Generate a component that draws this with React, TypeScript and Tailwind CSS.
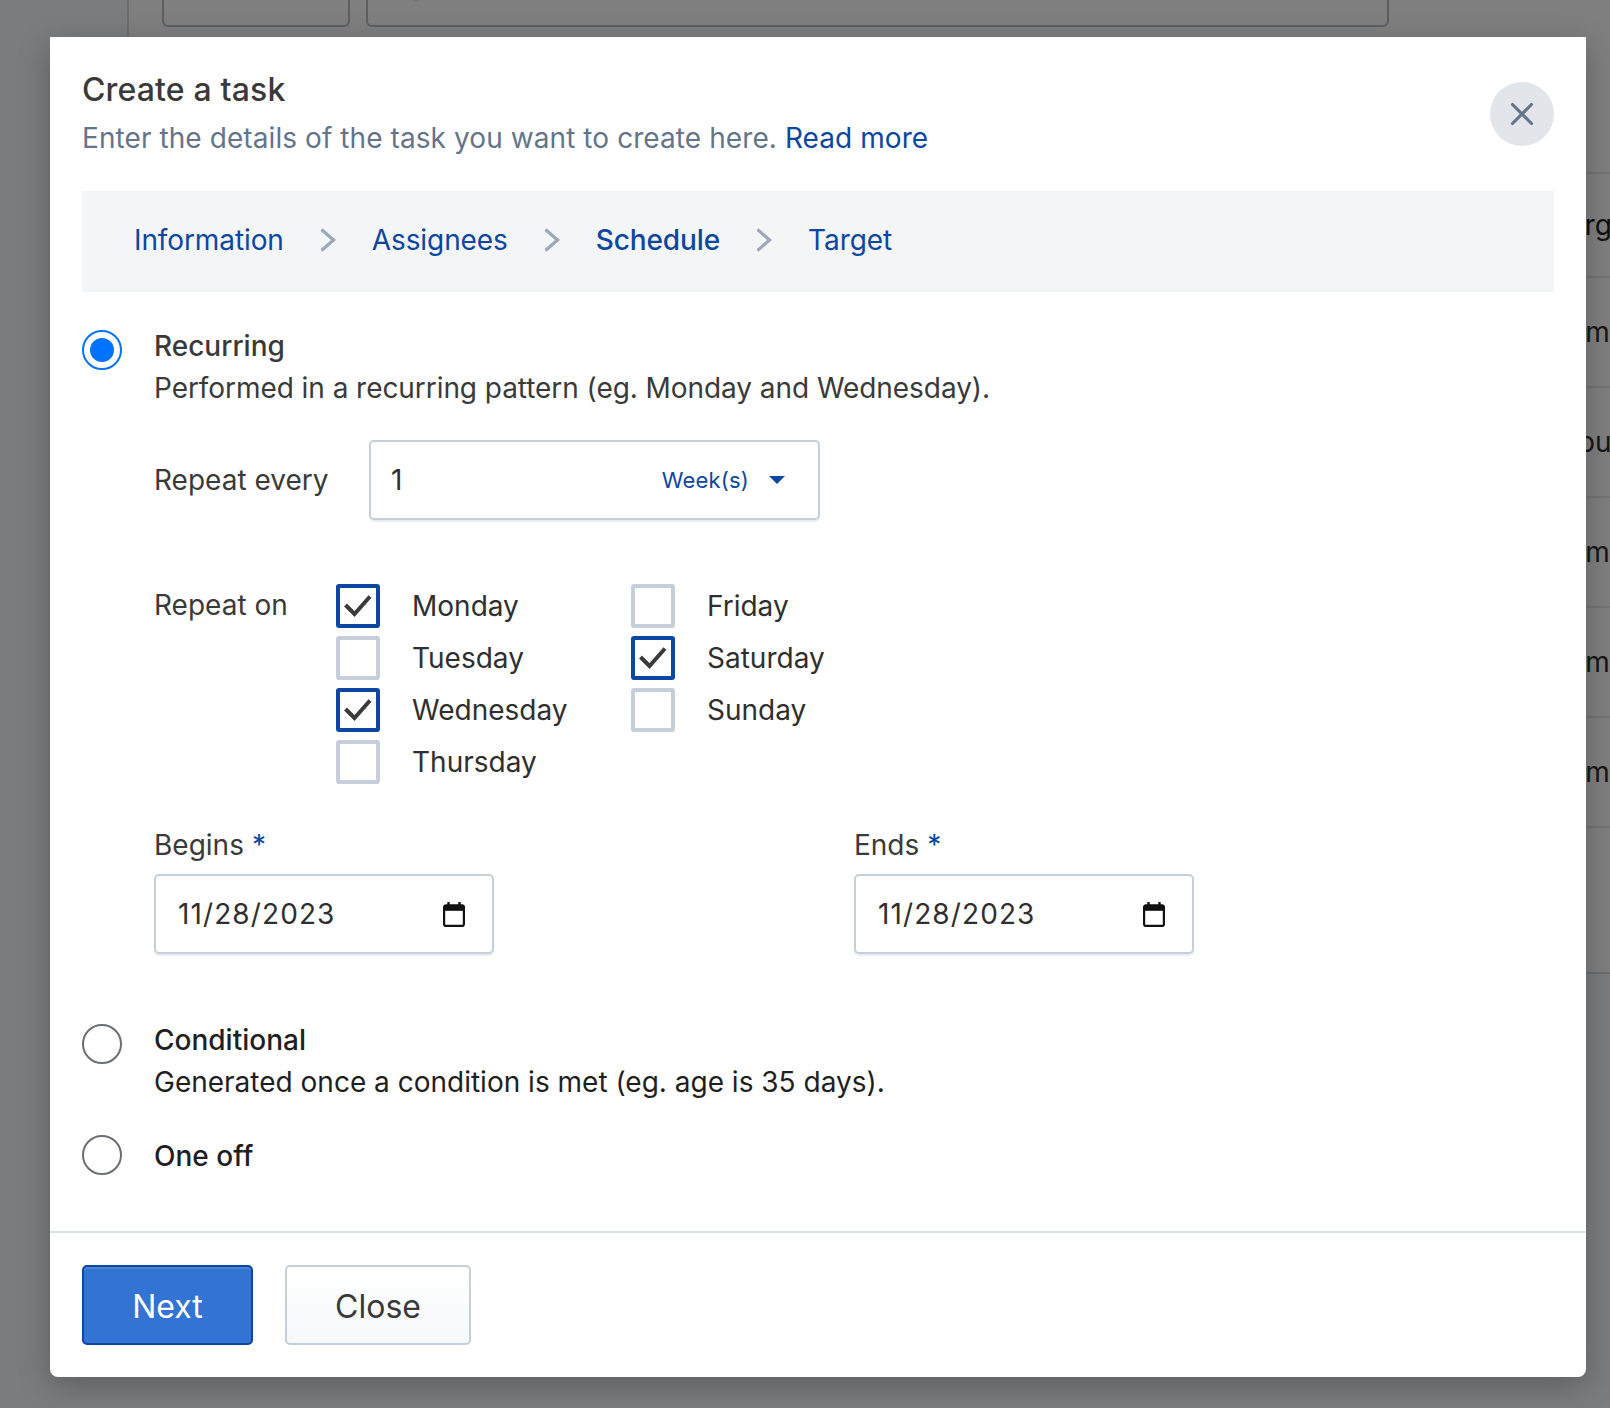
import React from "react";
import { Search, X } from "lucide-react";

const rows = ["Template", "Mount", "Template", "Template", "Template"];

function Radio({ checked }: { checked?: boolean }) {
  if (checked) {
    return (
      <span className="flex h-10 w-10 shrink-0 items-center justify-center rounded-full border-2 border-[#0073ff] bg-white">
        <span className="h-6 w-6 rounded-full bg-[#0073ff]" />
      </span>
    );
  }
  return <span className="h-10 w-10 shrink-0 rounded-full border-2 border-[#6b6f73] bg-white" />;
}

function Day({ label, checked }: { label: string; checked?: boolean }) {
  return (
    <div className="flex h-11 items-center">
      {checked ? (
        <span className="flex h-11 w-11 shrink-0 items-center justify-center rounded-[3px] border-4 border-[#0d47a1] bg-white">
          <svg width="28" height="24" viewBox="0 0 28 24" fill="none">
            <path d="M1.5 11L10.5 20L26 2.5" stroke="#3b3b3b" strokeWidth="4" />
          </svg>
        </span>
      ) : (
        <span className="h-11 w-11 shrink-0 rounded-[3px] border-4 border-[#c6cfd9] bg-white" />
      )}
      <span className="ml-[32px] text-[#2f2f2f]">{label}</span>
    </div>
  );
}

function DateField({ label }: { label: string }) {
  return (
    <div className="w-[340px]">
      <div className="mb-[8px] h-[42px] leading-[42px] text-[#3a3a3a]">
        {label}
        <span className="ml-[8px] text-[#0d47a1]">*</span>
      </div>
      <div className="flex h-20 items-center justify-between rounded-[5px] border-2 border-[#c6cfd9] pl-[22px] pr-[27px] text-[#2f2f2f] shadow-[0_2px_0_#e9edf1]">
        <span className="tracking-[1.1px]">11/28/2023</span>
        <svg width="22" height="25" viewBox="0 0 22 25" fill="none">
          <path d="M5.5 0V4M16.5 0V4" stroke="#111" strokeWidth="2.4" />
          <rect x="1.1" y="3.3" width="19.8" height="20.6" rx="2" stroke="#111" strokeWidth="2.2" />
          <rect x="1.1" y="3.3" width="19.8" height="5.5" fill="#111" />
        </svg>
      </div>
    </div>
  );
}

function Chevron() {
  return (
    <svg className="ml-[35px] mr-[36px] shrink-0" width="17" height="24" viewBox="0 0 17 24" fill="none">
      <path d="M2.5 1.5L14.5 12L2.5 22.5" stroke="#9aa8b8" strokeWidth="3.2" />
    </svg>
  );
}

export default function App() {
  return (
    <div className="relative h-[1408px] w-full overflow-hidden bg-[#f4f8fc] font-['Inter',sans-serif] text-[28px] leading-[42px]">
      {/* page behind the dialog */}
      <div className="ml-[127px] h-[974px] border-b-2 border-l-2 border-[#d4d9df] bg-white">
        <div className="flex h-[172px] items-start gap-4 pl-[33px]">
          <div className="h-[27px] w-[188px] rounded-b-[6px] border-2 border-t-0 border-[#b8c1cb]" />
          <div className="h-[27px] w-[1023px] rounded-b-[6px] border-2 border-t-0 border-[#b8c1cb]">
            <Search className="-mt-[29px] ml-[20px] text-[#2f2f2f]" size={32} />
          </div>
        </div>
        <div className="flex h-[104px] items-center border-t-2 border-[#e6e9ec] pl-[1424px] text-[#1f1f1f]">Target</div>
        {rows.map((r, i) => (
          <div key={i} className="flex h-[110px] items-center border-t-2 border-[#e6e9ec] pl-[1424px] text-[#2f2f2f]">
            {r}
          </div>
        ))}
        <div className="border-t-2 border-[#e6e9ec]" />
      </div>

      <div className="absolute inset-0 bg-black/50" />

      {/* dialog */}
      <div className="absolute left-[50px] top-[37px] h-[1340px] w-[1536px] rounded-b-[8px] bg-white shadow-[0_8px_32px_rgba(0,0,0,0.25)]">
        <div className="flex h-[154px] justify-between px-8 pt-[33px]">
          <div>
            <h2 className="text-[32px] font-[450] leading-[40px] tracking-[0.15px] text-[#3a3a3a]">Create a task</h2>
            <p className="mt-[7px] tracking-[0.08px] text-[#64748b]">
              Enter the details of the task you want to create here. <span className="text-[#0d47a1]">Read more</span>
            </p>
          </div>
          <button className="mt-[12px] flex h-16 w-16 items-center justify-center rounded-full bg-[#e2e6eb] text-[#64748b]">
            <X size={38} strokeWidth={2} />
          </button>
        </div>

        <div className="mx-8 flex h-[101px] items-center bg-[#f4f5f7] pb-[4px] pl-[52px] tracking-[-0.1px] text-[#0d47a1]">
          <span>Information</span>
          <Chevron />
          <span>Assignees</span>
          <Chevron />
          <span className="font-[500]">Schedule</span>
          <Chevron />
          <span>Target</span>
        </div>

        <div className="px-8 pt-[38px]">
          <div className="flex gap-[32px]">
            <Radio checked />
            <div className="-mt-[5px] flex-1">
              <div className="font-[450] text-[#3a3a3a]">Recurring</div>
              <div className="tracking-[-0.06px] text-[#3a3a3a]">Performed in a recurring pattern (eg. Monday and Wednesday).</div>

              <div className="mt-[31px] flex items-center">
                <div className="w-[215px] text-[#3a3a3a]">Repeat every</div>
                <div className="flex h-20 w-[451px] items-center justify-between rounded-[5px] border-2 border-[#c6cfd9] pl-[20px] pr-[33px] text-[#2f2f2f] shadow-[0_2px_0_#e9edf1]">
                  <span>1</span>
                  <span className="flex items-center gap-[20px] text-[22px] tracking-[0.2px] text-[#0d47a1]">
                    Week(s)
                    <span className="h-0 w-0 border-x-[8px] border-t-[8px] border-x-transparent border-t-[#0d47a1]" />
                  </span>
                </div>
              </div>

              <div className="mt-[64px] flex">
                <div className="w-[182px] text-[#3a3a3a]">Repeat on</div>
                <div className="flex w-[295px] flex-col gap-2">
                  <Day label="Monday" checked />
                  <Day label="Tuesday" />
                  <Day label="Wednesday" checked />
                  <Day label="Thursday" />
                </div>
                <div className="flex flex-col gap-2">
                  <Day label="Friday" />
                  <Day label="Saturday" checked />
                  <Day label="Sunday" />
                </div>
              </div>

              <div className="mt-[40px] flex gap-[360px]">
                <DateField label="Begins" />
                <DateField label="Ends" />
              </div>
            </div>
          </div>

          <div className="mt-[70px] flex gap-[32px]">
            <Radio />
            <div className="-mt-[5px]">
              <div className="font-[450] text-[#1f1f1f]">Conditional</div>
              <div className="text-[#1f1f1f]">Generated once a condition is met (eg. age is 35 days).</div>
            </div>
          </div>

          <div className="mt-[29px] flex items-center gap-[32px]">
            <Radio />
            <div className="pt-[3px] font-[450] text-[#1f1f1f]">One off</div>
          </div>
        </div>

        <div className="absolute inset-x-0 bottom-0 flex h-[146px] gap-8 border-t-2 border-[#dee3e8] px-8 pt-[32px]">
          <button className="h-20 w-[171px] rounded-[5px] border-2 border-[#0d47a1] bg-[#3273d3] pt-[3px] text-[32px] text-white shadow-[inset_0_2px_0_rgba(255,255,255,0.12)]">Next</button>
          <button className="h-20 w-[186px] rounded-[5px] border-2 border-[#c6cfd9] bg-gradient-to-b from-white to-[#f6f8fa] pt-[3px] text-[32px] text-[#3a3a3a]">Close</button>
        </div>
      </div>
    </div>
  );
}
